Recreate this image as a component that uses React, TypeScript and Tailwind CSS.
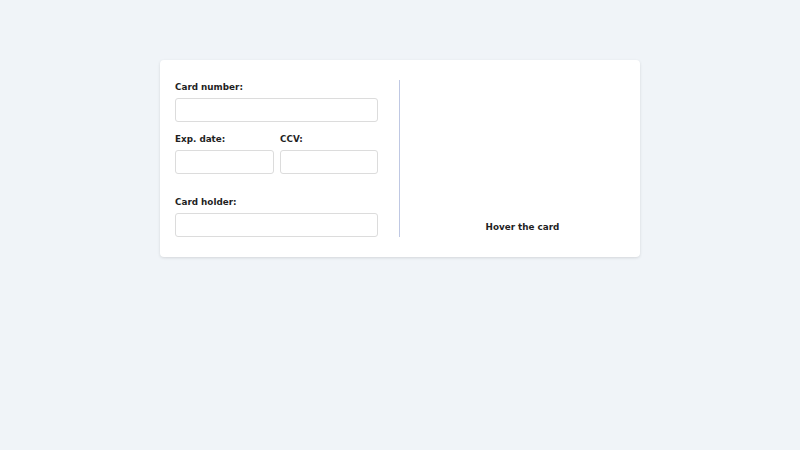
import React from 'react';

const Field: React.FC<{ label: string; className?: string }> = ({ label, className = '' }) => (
  <div className={`flex flex-col ${className}`}>
    <label className="pt-[1px] text-[8.8px] leading-[12px] font-bold text-[#1f1f1f]">{label}</label>
    <input className="mt-[5px] h-[24px] w-full rounded-[3px] border border-[#dcdcdc] bg-white px-2 text-[12px] outline-none" />
  </div>
);

export default function App() {
  return (
    <div
      className="min-h-[450px] w-full bg-[#f0f4f8] pt-[60px]"
      style={{ fontFamily: '"DejaVu Sans", sans-serif' }}
    >
      <div className="mx-auto flex w-[480px] rounded-[4px] bg-white pt-[20px] pb-[20px] pl-[15px] pr-[15px] shadow-[0_1px_3px_rgba(0,0,0,0.12)]">
        <div className="flex w-[203px] flex-col">
          <Field label="Card number:" />
          <div className="mt-[10px] flex gap-[6px]">
            <Field label="Exp. date:" className="w-[99px]" />
            <Field label="CCV:" className="w-[98px]" />
          </div>
          <Field label="Card holder:" className="mt-[21px]" />
        </div>
        <div className="ml-[21px] w-px bg-[#bfc8e3]" />
        <div className="ml-[20px] flex flex-1 items-end justify-center pb-[3px]">
          <span className="text-[8.8px] leading-[14px] font-bold text-[#1f1f1f]">Hover the card</span>
        </div>
      </div>
    </div>
  );
}
